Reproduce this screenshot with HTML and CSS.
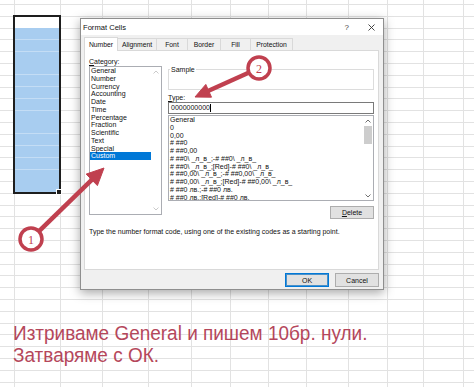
FILE: index.html
```html
<!DOCTYPE html>
<html lang="bg">

<head>
    <meta charset="UTF-8">
    <meta name="viewport" content="width=device-width, initial-scale=1.0">
    <title>Format Cells</title>
    <link rel="stylesheet" href="styles.css">
</head>

<body>
    <div class="sheet">
        <!-- Избраната колона -->
        <div class="selection">
            <div class="sel-first"></div>
            <div class="sel-rest"></div>
            <span class="fill-handle"></span>
        </div>

        <p class="caption">Изтриваме General и пишем 10бр. нули.<br>Затваряме с ОК.</p>

        <!-- Прозорец Format Cells -->
        <div class="dialog">
            <div class="titlebar">
                <span class="title">Format Cells</span>
                <span class="help">?</span>
                <svg class="close" width="7" height="7" viewBox="0 0 7 7">
                    <path d="M0.5 0.5 L6.5 6.5 M6.5 0.5 L0.5 6.5" stroke="#333" stroke-width="0.9" fill="none" />
                </svg>
            </div>

            <div class="tabs">
                <div class="tab active w-number">Number</div>
                <div class="tab w-align">Alignment</div>
                <div class="tab w-font">Font</div>
                <div class="tab w-border">Border</div>
                <div class="tab w-fill">Fill</div>
                <div class="tab w-prot">Protection</div>
            </div>

            <div class="panel">
                <div class="columns">
                    <div class="col-left">
                        <div class="label"><u>C</u>ategory:</div>
                        <div class="listbox catlist">
                            <ul class="items">
                                <li>General</li>
                                <li>Number</li>
                                <li>Currency</li>
                                <li>Accounting</li>
                                <li>Date</li>
                                <li>Time</li>
                                <li>Percentage</li>
                                <li>Fraction</li>
                                <li>Scientific</li>
                                <li>Text</li>
                                <li>Special</li>
                                <li class="selected">Custom</li>
                            </ul>
                            <div class="scroll disabled">
                                <svg width="6" height="4" viewBox="0 0 6 4"><path d="M0.5 3.5 L3 1 L5.5 3.5" /></svg>
                                <svg width="6" height="4" viewBox="0 0 6 4"><path d="M0.5 0.5 L3 3 L5.5 0.5" /></svg>
                            </div>
                        </div>
                    </div>

                    <div class="col-right">
                        <div class="sample">
                            <span class="sample-label">Sample</span>
                        </div>
                        <div class="label type-label"><u>T</u>ype:</div>
                        <div class="input">0000000000<span class="caret"></span></div>
                        <div class="listbox fmtlist">
                            <ul class="items">
                                <li>General</li>
                                <li>0</li>
                                <li>0,00</li>
                                <li># ##0</li>
                                <li># ##0,00</li>
                                <li># ##0\ _л_в_;-# ##0\ _л_в_</li>
                                <li># ##0\ _л_в_;[Red]-# ##0\ _л_в_</li>
                                <li># ##0,00\ _л_в_;-# ##0,00\ _л_в_</li>
                                <li># ##0,00\ _л_в_;[Red]-# ##0,00\ _л_в_</li>
                                <li># ##0 лв.;-# ##0 лв.</li>
                                <li># ##0 лв.;[Red]-# ##0 лв.</li>
                            </ul>
                            <div class="scroll">
                                <svg width="6" height="4" viewBox="0 0 6 4"><path d="M0.5 3.5 L3 1 L5.5 3.5" /></svg>
                                <div class="thumb"></div>
                                <div class="spacer"></div>
                                <svg width="6" height="4" viewBox="0 0 6 4"><path d="M0.5 0.5 L3 3 L5.5 0.5" /></svg>
                            </div>
                        </div>
                        <div class="delete-row">
                            <button class="btn"><u>D</u>elete</button>
                        </div>
                    </div>
                </div>
                <p class="hint">Type the number format code, using one of the existing codes as a starting point.</p>
            </div>

            <div class="footer">
                <button class="btn default">OK</button>
                <button class="btn">Cancel</button>
            </div>
        </div>

        <!-- Стрелки -->
        <svg class="marks" width="474" height="387" viewBox="0 0 474 387">
            <g stroke="#c0404f" fill="#c0404f">
                <line x1="39.6" y1="230.6" x2="92.5" y2="179.2" stroke-width="4.5" />
                <polygon points="104,168 97.4,185.6 86.2,174.1" stroke-width="1" stroke-linejoin="round" />
                <line x1="248" y1="73" x2="208" y2="91" stroke-width="4.5" />
                <polygon points="195,97 205.8,84.4 211.5,97.2" stroke-width="1" stroke-linejoin="round" />
            </g>
            <circle cx="31" cy="239" r="11" fill="#fff" stroke="#c0404f" stroke-width="3.5" />
            <circle cx="259" cy="68" r="11" fill="#fff" stroke="#c0404f" stroke-width="3.5" />
            <text x="31" y="243.5" class="num">1</text>
            <text x="259" y="72.5" class="num">2</text>
        </svg>
    </div>
</body>

</html>
```

FILE: styles.css
```css
body {
    margin: 0;
    padding: 0;
    background-color: #fff;
    overflow: hidden;
}

/* Листът с клетки */
.sheet {
    position: relative;
    width: 474px;
    height: 387px;
    box-sizing: border-box;
    padding: 15px 0 0 13px;
    background-color: #fff;
    background-image:
        linear-gradient(90deg,
            transparent 0 14px, #e2e2e2 14px 15px,
            transparent 15px 60px, #e2e2e2 60px 61px,
            transparent 61px 102px, #e2e2e2 102px 103px,
            transparent 103px 148px, #e2e2e2 148px 149px,
            transparent 149px 191px, #e2e2e2 191px 192px,
            transparent 192px 230px, #e2e2e2 230px 231px,
            transparent 231px 268px, #e2e2e2 268px 269px,
            transparent 269px 306px, #e2e2e2 306px 307px,
            transparent 307px 348px, #e2e2e2 348px 349px,
            transparent 349px 387px, #e2e2e2 387px 388px,
            transparent 388px 423px, #e2e2e2 423px 424px,
            transparent 424px 463px, #e2e2e2 463px 464px,
            transparent 464px),
        repeating-linear-gradient(180deg, #e2e2e2 0 1px, transparent 1px 11.8px);
    background-position: 0 0, 0 4px;
}

.selection {
    position: relative;
    width: 48px;
    height: 179px;
    box-sizing: border-box;
    border: 2px solid #1e1e1e;
    display: flex;
    flex-direction: column;
}

.sel-first {
    height: 11px;
    background-color: #fff;
}

.sel-rest {
    flex: 1;
    background-color: #a8cdf0;
    background-image: repeating-linear-gradient(180deg, #a8cdf0 0 11px, #c4ddf5 11px 11.8px);
}

.fill-handle {
    position: absolute;
    right: -3px;
    bottom: -3px;
    width: 4px;
    height: 4px;
    background-color: #1e1e1e;
    border: 1px solid #fff;
}

.caption {
    width: 420px;
    margin: 128px 0 0 0;
    font-family: "Liberation Sans", sans-serif;
    font-size: 20.5px;
    line-height: 21.5px;
    color: #b5475b;
    transform: scaleX(0.925);
    transform-origin: left top;
}

/* Прозорец */
.dialog {
    position: absolute;
    left: 80px;
    top: 18px;
    width: 302px;
    height: 270px;
    border: 1px solid #8f8f8f;
    background-color: #f0f0f0;
    box-shadow: 0 3px 10px rgba(0, 0, 0, 0.35);
    display: flex;
    flex-direction: column;
    font-family: "Liberation Sans", Arial, sans-serif;
    font-size: 7px;
    color: #111;
}

.titlebar {
    height: 16px;
    background-color: #fff;
    display: flex;
    align-items: center;
    padding-left: 2px;
}

.title {
    font-size: 7.6px;
    flex: 1;
}

.help {
    font-size: 8px;
    color: #444;
    margin-right: 19px;
}

.close {
    margin-right: 8px;
}

.tabs {
    display: flex;
    margin: 2px 0 0 3px;
    height: 13px;
    position: relative;
    z-index: 1;
}

.tab {
    box-sizing: border-box;
    height: 12px;
    margin-top: 1px;
    margin-right: -1px;
    border: 1px solid #d9d9d9;
    border-bottom: none;
    background-color: #f0f0f0;
    display: flex;
    align-items: center;
    justify-content: center;
    font-size: 6.8px;
}

.tab.active {
    height: 14px;
    margin-top: 0;
    background-color: #fff;
}

.w-number { width: 34px; }
.w-align { width: 40px; }
.w-font { width: 32px; }
.w-border { width: 34px; }
.w-fill { width: 31px; }
.w-prot { width: 43px; }

.panel {
    height: 220px;
    box-sizing: border-box;
    margin: 0 4px 0 3px;
    padding: 6px 4px 0 4px;
    background-color: #fff;
    border: 1px solid #d9d9d9;
}

.columns {
    display: flex;
    gap: 6px;
}

.col-left {
    width: 73px;
}

.col-right {
    flex: 1;
    display: flex;
    flex-direction: column;
    padding-top: 9px;
}

.label {
    height: 9px;
    line-height: 9px;
}

.listbox {
    box-sizing: border-box;
    border: 1px solid #abadb3;
    display: flex;
    overflow: hidden;
}

.items {
    flex: 1;
    list-style: none;
    margin: 0;
    padding: 0;
    overflow: hidden;
}

.items li {
    height: 7.75px;
    line-height: 7.75px;
    padding-left: 1px;
    white-space: nowrap;
}

.items li.selected {
    background-color: #0078d7;
    color: #fff;
}

.catlist {
    height: 149px;
}

.scroll {
    width: 10px;
    display: flex;
    flex-direction: column;
    align-items: center;
    justify-content: space-between;
    padding: 3px 0;
}

.scroll path {
    fill: none;
    stroke: #606060;
    stroke-width: 0.9;
}

.scroll.disabled path {
    stroke: #c4c4c4;
}

.thumb {
    width: 8px;
    height: 18px;
    margin-top: 3px;
    background-color: #cdcdcd;
}

.spacer {
    flex: 1;
}

.sample {
    height: 19px;
    margin-top: 3px;
    border: 1px solid #dcdcdc;
}

.sample-label {
    display: block;
    width: fit-content;
    margin: -4px 0 0 1px;
    padding: 0 1px;
    background-color: #fff;
    line-height: 8px;
}

.type-label {
    margin-top: 3px;
}

.input {
    height: 12px;
    box-sizing: border-box;
    border: 1px solid #7a7a7a;
    padding-left: 2px;
    line-height: 10px;
    display: flex;
    align-items: center;
}

.caret {
    width: 1px;
    height: 8px;
    background-color: #000;
}

.fmtlist {
    height: 86px;
    margin-top: 1px;
}

.fmtlist .scroll {
    padding: 3px 0 2px;
}

.delete-row {
    display: flex;
    justify-content: flex-end;
    margin-top: 5px;
}

.btn {
    width: 44px;
    height: 13px;
    padding: 0;
    font-family: inherit;
    font-size: 7px;
    color: #111;
    background-color: #e1e1e1;
    border: 1px solid #adadad;
}

.hint {
    margin: 9px 0 0 0;
    line-height: 8px;
}

.footer {
    display: flex;
    justify-content: flex-end;
    gap: 6px;
    padding: 3px 4px 0 0;
}

.footer .btn {
    height: 14px;
}

.btn.default {
    border-color: #0078d7;
    box-shadow: inset 0 0 0 1px #4a90c8;
}

/* Стрелки */
.marks {
    position: absolute;
    left: 0;
    top: 0;
    pointer-events: none;
}

.num {
    font-family: "Liberation Serif", serif;
    font-size: 12px;
    fill: #c0404f;
    text-anchor: middle;
}
```
